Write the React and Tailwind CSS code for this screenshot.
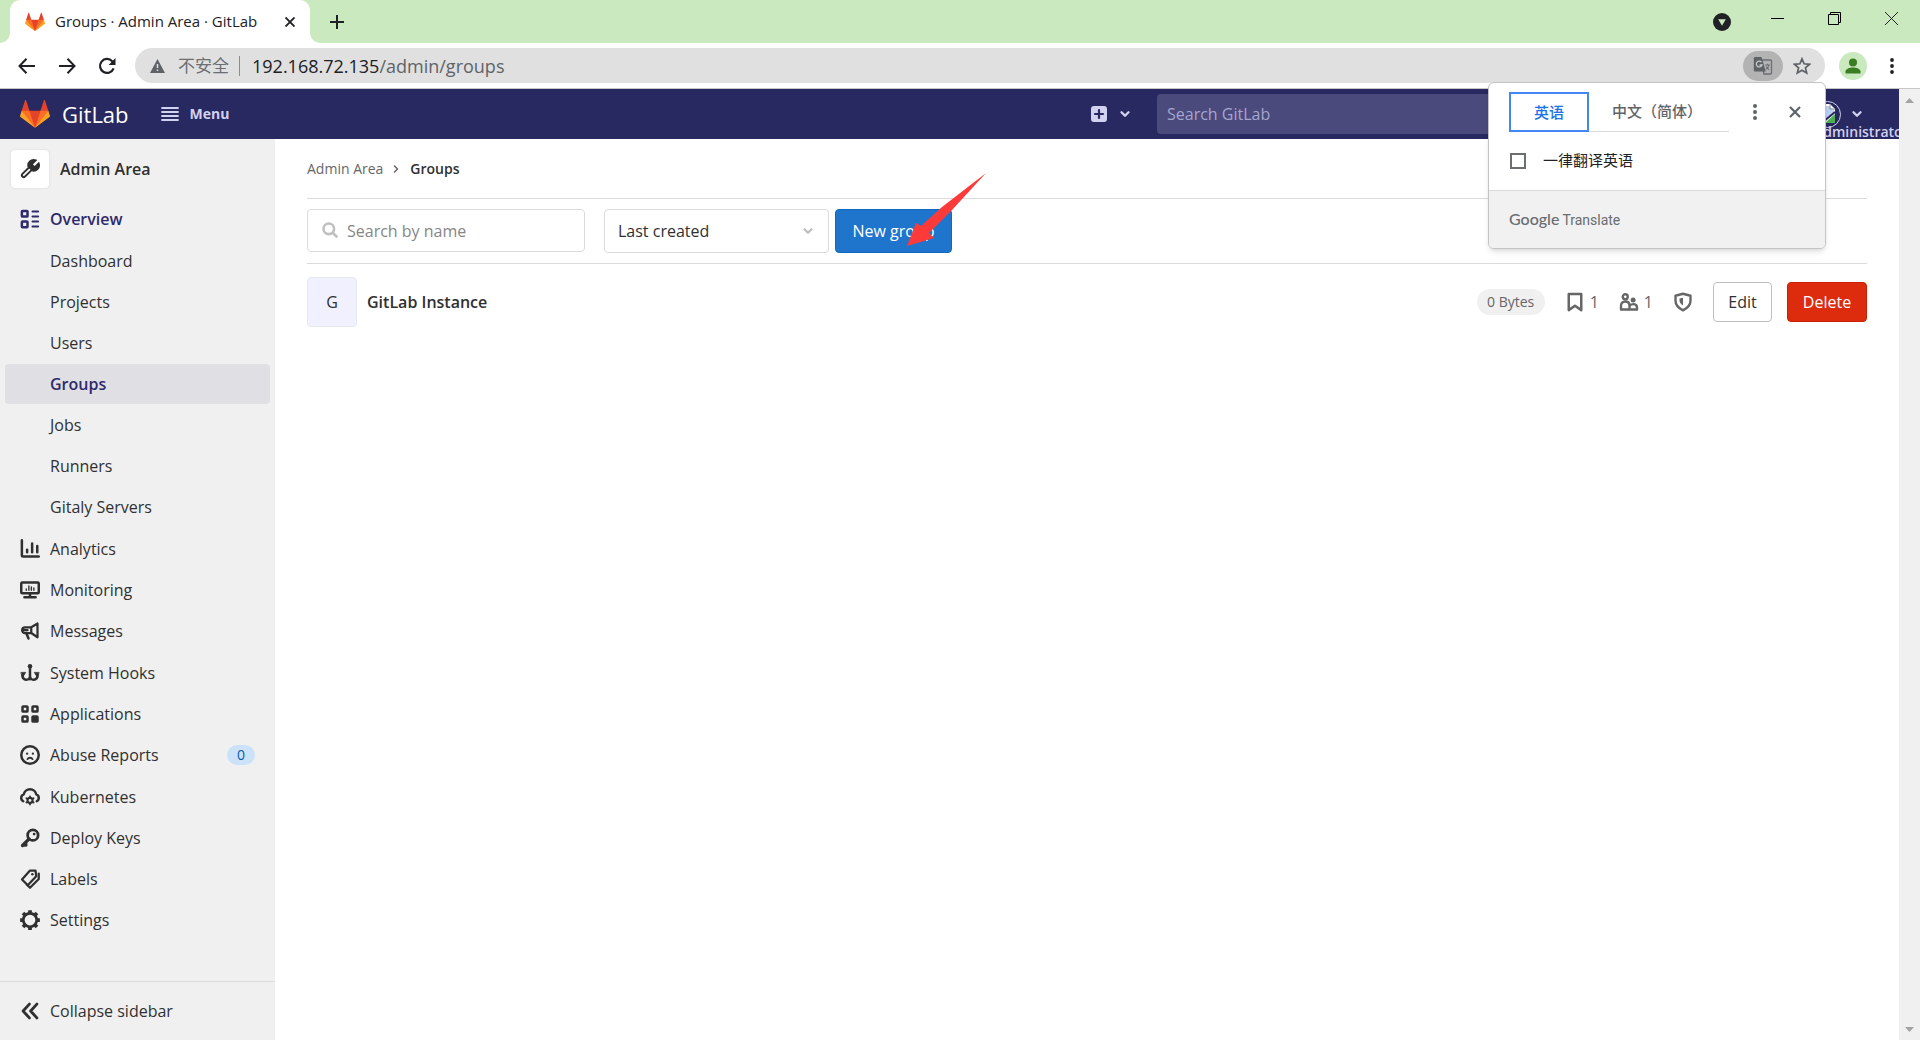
import { useState } from "react";
import { ChevronDown, ChevronRight } from "lucide-react";

const OVERVIEW_LINKS = ["Dashboard", "Projects", "Users", "Groups", "Jobs", "Runners", "Gitaly Servers"];

const NAV_GROUPS = [
  ["Analytics", "Monitoring", "Messages"],
  ["System Hooks", "Applications", "Abuse Reports"],
  ["Kubernetes", "Deploy Keys", "Labels", "Settings"],
];

// Stroked shapes on a 16x16 grid, keyed by the menu entry they belong to
const NAV_ICONS = {
  Overview: (
    <>
      <rect x="1.5" y="1.5" width="4.5" height="4.5" rx="0.5" />
      <rect x="1.5" y="10" width="4.5" height="4.5" rx="0.5" />
      <path d="M10 2h4.5M10 6h4.5M10 10h4.5M10 14h4.5" strokeWidth="1.6" />
    </>
  ),
  Analytics: <path d="M1.5 1v12a1 1 0 0 0 1 1H15M5.7 8.5v2M9.7 3.5v7M13.8 5.5v5" />,
  Monitoring: (
    <>
      <rect x="1" y="2" width="14" height="8.5" rx="0.8" />
      <path d="M8 10.5v3M3.5 13.8h9" />
      <path d="M5 7.2v1M7.1 4.8v3.4M9.1 5.6v2.6M11.1 6.4v1.8" strokeWidth="1.1" />
    </>
  ),
  Messages: (
    <>
      <path d="M14 2v11L9 9.6H4a2.2 2.2 0 0 1 0-4.6h5zM9 5v4.6M2 7.3h4" strokeWidth="1.8" />
      <path d="M5 9.6 6.8 14" />
    </>
  ),
  "System Hooks": (
    <>
      <circle cx="8" cy="2.6" r="1.8" fill="currentColor" stroke="none" />
      <path d="M8 3v10M2 9.5c0 5 6 5 6 1M14 9.5c0 5-6 5-6 1" />
      <path d="M1 7.5h3.6L2 11.5zM15 7.5h-3.6L14 11.5z" fill="currentColor" strokeWidth="0.6" />
    </>
  ),
  Applications: (
    <>
      <rect x="2" y="2" width="4" height="4" rx="0.5" />
      <rect x="10" y="2" width="4" height="4" rx="0.5" />
      <rect x="2" y="10" width="4" height="4" rx="0.5" />
      <rect x="10" y="10" width="4" height="4" rx="0.5" fill="currentColor" />
    </>
  ),
  "Abuse Reports": (
    <>
      <circle cx="8" cy="8" r="7" />
      <path d="M6 11.3c.8-1.500 3.200-1.500 4 0" strokeWidth="1.5" />
      <circle cx="5.7" cy="6.9" r="0.9" fill="currentColor" stroke="none" />
      <circle cx="10.3" cy="6.9" r="0.9" fill="currentColor" stroke="none" />
    </>
  ),
  Kubernetes: (
    <>
      <path d="M2.6 11.4A3 3 0 0 1 3 5.9a5.1 5.1 0 0 1 10 0 3 3 0 0 1 .4 5.5" />
      <circle cx="8" cy="10.7" r="2" strokeWidth="1.7" />
      <path d="M8 7.4v1M8 13v1M5.1 9l.9.6M10 11.8l.9.6M5.1 12.4l.9-.6M10 9.6l.9-.6" strokeWidth="1.4" />
    </>
  ),
  "Deploy Keys": (
    <>
      <circle cx="10.3" cy="5.7" r="4.2" strokeWidth="2.2" />
      <circle cx="11.3" cy="4.8" r="1.1" fill="currentColor" stroke="none" />
      <path d="M7.3 8.7 2 14M2.2 13.6h2.6M4.6 11.6v2" strokeWidth="2.6" />
    </>
  ),
  Labels: (
    <>
      <path d="M8 1.2h4.4L13 5.8 6.2 13 1.6 8.4z" strokeWidth="1.8" />
      <path d="M15 3.6 15 8 8 15 5.6 12.6" strokeWidth="1.8" />
      <circle cx="9.9" cy="4.2" r="1" fill="currentColor" stroke="none" />
    </>
  ),
  Settings: (
    <>
      <circle cx="8" cy="8" r="5.4" strokeWidth="2.2" />
      <path
        d="M8 .1v2.400M8 13.500v2.400M.1 8h2.400M13.500 8h2.400M2.400 2.400l1.600 1.600M12 12l1.600 1.600M2.400 13.600 4 12M12 4l1.600-1.600"
        strokeWidth="3"
        strokeLinecap="butt"
      />
    </>
  ),
  Collapse: <path d="M7.500 2.500 2.500 8l5 5.500M13.500 2.500 8.500 8l5 5.500" strokeWidth="2.300" />,
};

function NavIcon({ name }) {
  return (
    <svg
      className="size-5 shrink-0"
      viewBox="0 0 16 16"
      fill="none"
      stroke="currentColor"
      strokeWidth="2"
      strokeLinecap="round"
      strokeLinejoin="round"
      aria-hidden="true"
    >
      {NAV_ICONS[name]}
    </svg>
  );
}

function Tanuki({ className }) {
  return (
    <svg className={className} viewBox="0 0 36 36" aria-hidden="true">
      <path fill="#e24329" d="M2 14l9.38 9v-9l-4-12.28c-.205-.632-1.176-.632-1.38 0z" />
      <path fill="#e24329" d="M34 14l-9.38 9v-9l4-12.28c.205-.632 1.176-.632 1.38 0z" />
      <path fill="#e24329" d="M18 34.38 3 14h30z" />
      <path fill="#fc6d26" d="M18 34.38 11.38 14H2l4 11z" />
      <path fill="#fc6d26" d="M18 34.38 24.62 14H34l-4 11z" />
      <path fill="#fca326" d="M2 14L.1 20.16c-.18.565 0 1.2.5 1.56l17.42 12.66z" />
      <path fill="#fca326" d="M34 14l1.9 6.16c.18.565 0 1.2-.5 1.56L18 34.38z" />
    </svg>
  );
}

function TabStrip() {
  return (
    <div className="flex h-[43px] bg-[#cae9be] pl-[10px]">
      <div className="relative flex w-[300px] items-center rounded-t-[10px] bg-white pr-[10px] pl-[15px]">
        <svg className="absolute bottom-0 -left-[10px] size-[10px]" viewBox="0 0 10 10" aria-hidden="true">
          <path d="M10 0v10H0A10 10 0 0 0 10 0z" fill="#fff" />
        </svg>
        <svg className="absolute -right-[10px] bottom-0 size-[10px]" viewBox="0 0 10 10" aria-hidden="true">
          <path d="M0 0v10h10A10 10 0 0 1 0 0z" fill="#fff" />
        </svg>
        <Tanuki className="size-5" />
        <span className="ml-[10px] flex-1 text-[15px] whitespace-nowrap text-[#202124]">Groups · Admin Area · GitLab</span>
        <button type="button" aria-label="Close tab" className="flex size-5 items-center justify-center">
          <svg className="size-[10px]" viewBox="0 0 10 10" stroke="#202124" strokeWidth="1.9" aria-hidden="true">
            <path d="M.5.5l9 9M9.5.5l-9 9" />
          </svg>
        </button>
      </div>
      <button type="button" aria-label="New tab" className="ml-[17px] flex w-5 items-center justify-center">
        <svg className="size-[14px]" viewBox="0 0 14 14" stroke="#202124" strokeWidth="2" aria-hidden="true">
          <path d="M7 0v14M0 7h14" />
        </svg>
      </button>
      <div className="ml-auto flex">
        <button type="button" aria-label="Search tabs" className="flex w-9 items-center justify-center">
          <svg className="size-[18px]" viewBox="0 0 18 18" aria-hidden="true">
            <circle cx="9" cy="9" r="9" fill="#202124" />
            <path d="M5.2 6.2h7.6L9 12.8z" fill="#cae9be" />
          </svg>
        </button>
        <button type="button" aria-label="Minimize" className="ml-[9px] flex h-9 w-[57px] items-center justify-center">
          <svg className="size-[13px]" viewBox="0 0 13 13" stroke="#000" aria-hidden="true">
            <path d="M0 6.5h13" />
          </svg>
        </button>
        <button type="button" aria-label="Restore" className="flex h-9 w-[57px] items-center justify-center">
          <svg className="size-[13px]" viewBox="0 0 13 13" fill="none" stroke="#000" aria-hidden="true">
            <path d="M.5 2.5h10v10H.5zM2.5 2V.5h10v10H11" />
          </svg>
        </button>
        <button type="button" aria-label="Close window" className="flex h-9 w-[57px] items-center justify-center">
          <svg className="size-[13px]" viewBox="0 0 13 13" stroke="#222" aria-hidden="true">
            <path d="M0 0l13 13M13 0L0 13" />
          </svg>
        </button>
      </div>
    </div>
  );
}

function TranslatePopup() {
  const [always, setAlways] = useState(false);

  return (
    <div className="absolute top-[39px] right-[94px] z-20 w-[338px] overflow-hidden rounded-md border border-[#c4c4c4] bg-white text-[15px] shadow-md">
      <div className="flex h-[57px] items-end pb-2 pl-5">
        <button type="button" className="h-10 w-20 border-2 border-[#4285f4] font-medium text-[#1a73e8]">英语</button>
        <button type="button" className="h-10 w-[140px] border-b border-[#dadce0] pr-1 font-medium text-[#5f6368]">中文（简体）</button>
        <button type="button" aria-label="Options" className="ml-4 flex h-10 w-5 items-center justify-center text-[#5f6368]">
          <svg className="h-4 w-1" viewBox="0 0 4 16" fill="currentColor" aria-hidden="true">
            <circle cx="2" cy="2" r="2" />
            <circle cx="2" cy="8" r="2" />
            <circle cx="2" cy="14" r="2" />
          </svg>
        </button>
        <button type="button" aria-label="Close" className="ml-5 flex h-10 w-5 items-center justify-center">
          <svg className="size-3" viewBox="0 0 12 12" stroke="#5f6368" strokeWidth="2.2" aria-hidden="true">
            <path d="M1 1l10 10M11 1L1 11" />
          </svg>
        </button>
      </div>
      <label className="flex h-[41px] items-center pl-[21px] text-[#202124]">
        <input
          type="checkbox"
          checked={always}
          onChange={(e) => setAlways(e.target.checked)}
          className="size-4 appearance-none border-2 border-[#6b6e73] checked:bg-[#1a73e8]"
        />
        <span className="ml-[17px]">一律翻译英语</span>
      </label>
      <div className="mt-[9px] flex h-[58px] items-baseline border-t border-[#dadada] bg-[#f1f1f1] pt-4 pl-5 text-[#696c70]">
        <span className="font-[Lato] text-base font-medium">Google</span>
        <span className="ml-[3px] font-[Roboto] text-sm">Translate</span>
      </div>
    </div>
  );
}

function Toolbar() {
  return (
    <div className="relative flex h-[46px] items-center border-b border-[#c6c6c6] bg-white pr-[18px] pl-[17px]">
      <div className="flex gap-5 text-[#202124]">
        <button type="button" aria-label="Back" className="size-5">
          <svg viewBox="0 0 20 20" fill="none" stroke="currentColor" strokeWidth="2" aria-hidden="true">
            <path d="M18 10H3M9.5 2.8L2.5 10l7 7.2" />
          </svg>
        </button>
        <button type="button" aria-label="Forward" className="size-5">
          <svg viewBox="0 0 20 20" fill="none" stroke="currentColor" strokeWidth="2" aria-hidden="true">
            <path d="M2 10H17M10.5 2.8l7 7.2-7 7.2" />
          </svg>
        </button>
        <button type="button" aria-label="Reload" className="size-5">
          <svg viewBox="0 0 20 20" fill="none" stroke="currentColor" strokeWidth="2.2" aria-hidden="true">
            <path d="M16.6 12.4A7 7 0 1 1 15.2 5.2L17 7" />
            <path d="M18.5 2v6.9h-6.9z" fill="currentColor" stroke="none" />
          </svg>
        </button>
      </div>
      <div className="ml-[18px] flex h-[35px] flex-1 items-center rounded-full bg-[#e0e0e0] pr-[14px] pl-[15px]">
        <svg className="h-[14px] w-[15px]" viewBox="0 0 15 14" aria-hidden="true">
          <path d="M7.5 0L15 14H0z" fill="#5f6368" />
          <path d="M7.5 5v4M7.5 10.5v1.5" stroke="#e0e0e0" strokeWidth="1.5" />
        </svg>
        <span className="ml-[13px] text-[17px] whitespace-nowrap text-[#6b6e73]">不安全</span>
        <span className="ml-[10px] h-5 w-px bg-[#8a8c90]" />
        <div
          role="textbox"
          aria-label="Address"
          contentEditable
          suppressContentEditableWarning
          spellCheck={false}
          className="ml-3 flex-1 text-lg whitespace-nowrap text-[#5f6368] outline-none"
        >
          <span className="text-[#202124]">192.168.72.135</span>/admin/groups
        </div>
        <button type="button" aria-label="Translate this page" className="flex h-[30px] w-10 items-center justify-center rounded-full bg-[#b3b3b4]">
          <svg className="size-5" viewBox="0 0 20 20" aria-hidden="true">
            <path d="M8 4h9.5a1 1 0 0 1 1 1v12a1 1 0 0 1-1 1H11z" fill="none" stroke="#6b6e73" strokeWidth="1.3" />
            <path d="M2 1h6.5l4.3 14.5H2A1.2 1.2 0 0 1 .8 14.3V2.2A1.2 1.2 0 0 1 2 1z" fill="#5f6368" />
            <path d="M8.5 6.2A2.9 2.9 0 1 0 9 9H6.5" fill="none" stroke="#c8c8c9" strokeWidth="1.3" />
            <path d="M12 9h5M14.5 7.8V9M16 9c-.4 2-1.6 3.4-3 4.3M13.4 10.5c.6 1.3 1.6 2.4 2.9 3.2" fill="none" stroke="#6b6e73" strokeWidth="1.1" />
          </svg>
        </button>
        <button type="button" aria-label="Bookmark this page" className="ml-[10px] size-[18px]">
          <svg viewBox="0 0 18 18" fill="none" stroke="#5f6368" strokeWidth="1.7" aria-hidden="true">
            <path d="M9 1.8l2.1 5 5.4.5-4.1 3.5 1.3 5.2L9 13.2 4.3 16l1.3-5.2-4.1-3.5 5.4-.5z" />
          </svg>
        </button>
      </div>
      <button type="button" aria-label="Profile" className="ml-[14px] size-7">
        <svg viewBox="0 0 28 28" aria-hidden="true">
          <circle cx="14" cy="14" r="14" fill="#cae9be" />
          <circle cx="14" cy="10.5" r="4" fill="#3a7d22" />
          <path d="M6.5 21.5v-2c0-2.5 4-4 7.5-4s7.5 1.5 7.5 4v2z" fill="#3a7d22" />
        </svg>
      </button>
      <button type="button" aria-label="Browser menu" className="ml-[15px] flex w-5 justify-center">
        <svg className="h-4 w-1" viewBox="0 0 4 16" fill="#202124" aria-hidden="true">
          <circle cx="2" cy="2" r="1.9" />
          <circle cx="2" cy="8" r="1.9" />
          <circle cx="2" cy="14" r="1.9" />
        </svg>
      </button>
      <TranslatePopup />
    </div>
  );
}

function Navbar() {
  return (
    <header className="flex h-[50px] shrink-0 items-center overflow-hidden bg-[#292961] pr-[35px] pl-5 text-[#d1d1f0]">
      <a href="#home" className="flex items-center gap-3 text-white">
        <Tanuki className="size-[30px]" />
        <span className="text-[22px]">GitLab</span>
      </a>
      <button type="button" className="ml-8 flex items-center gap-[11px] text-sm font-bold">
        <svg className="h-[14px] w-[18px]" viewBox="0 0 18 14" stroke="currentColor" strokeWidth="1.8" strokeLinecap="round" aria-hidden="true">
          <path d="M1 1h16M1 5h16M1 9h16M1 13h16" />
        </svg>
        Menu
      </button>
      <button type="button" aria-label="Create new" className="ml-auto flex items-center gap-[11px]">
        <svg className="size-4" viewBox="0 0 16 16" aria-hidden="true">
          <rect width="16" height="16" rx="3" fill="currentColor" />
          <path d="M8 4v8M4 8h8" stroke="#292961" strokeWidth="2.2" strokeLinecap="round" />
        </svg>
        <ChevronDown className="size-[14px]" strokeWidth={4} />
      </button>
      <input
        type="text"
        aria-label="Search GitLab"
        placeholder="Search GitLab"
        className="mr-[317px] ml-[25px] h-10 w-[340px] rounded bg-[#4b4a7c] px-[10px] text-base outline-none placeholder:text-[#a5a5cf]"
      />
      <button type="button" aria-label="User menu" className="relative flex items-center gap-[9px]">
        <span className="flex size-[27px] items-center justify-center overflow-hidden rounded-full border border-[#d1d1f0]">
          <svg className="h-5 w-4" viewBox="0 0 16 20" aria-hidden="true">
            <path d="M0 0h10l5 5v14H0z" fill="#fff" />
            <path d="M1 2h8l5 4v4L3 18H1z" fill="#bcd0f5" />
            <path d="M5 19l10-9v9z" fill="#4caf50" />
            <path d="M3 18L15 8" stroke="#292961" strokeWidth="2" />
            <path d="M10 0v5h5" fill="none" stroke="#8a8c90" />
          </svg>
        </span>
        <ChevronDown className="size-[14px]" strokeWidth={4} />
        <span className="absolute top-[21px] left-0 text-sm font-semibold">Administrator</span>
      </button>
    </header>
  );
}

function Sidebar() {
  const current = "Groups";

  return (
    <aside className="flex w-[275px] shrink-0 flex-col bg-[#f0f0f0] text-base text-[#303030]">
      <a href="#admin" className="flex items-center gap-[11px] px-[11px] pt-[11px] font-semibold">
        <span className="flex size-[38px] items-center justify-center rounded bg-white shadow-[0_0_2px_#ccc]">
          <svg className="size-[22px]" viewBox="0 0 24 24" aria-hidden="true">
            <path
              d="M14.7 6.3a1 1 0 0 0 0 1.4l1.6 1.6a1 1 0 0 0 1.4 0l3.77-3.77a6 6 0 0 1-7.94 7.94l-6.91 6.91a2.12 2.12 0 0 1-3-3l6.91-6.91a6 6 0 0 1 7.94-7.94l-3.76 3.76z"
              fill="currentColor"
              stroke="currentColor"
              strokeWidth="1.8"
            />
            <path d="M5.2 18.800l6.200-6.200" stroke="#fff" strokeWidth="1.9" strokeLinecap="round" />
          </svg>
        </span>
        Admin Area
      </a>
      <nav className="mt-[11px] flex flex-1 flex-col gap-px px-[5px]">
        <a href="#overview" className="flex h-10 items-center gap-[10px] pl-[15px] font-semibold text-[#2f2a6b]">
          <NavIcon name="Overview" />
          Overview
        </a>
        <ul className="flex flex-col gap-px py-px">
          {OVERVIEW_LINKS.map((label) => (
            <li key={label}>
              <a
                href="#overview"
                className={
                  label === current
                    ? "flex h-10 items-center rounded bg-[#e0dfe4] pl-[45px] font-semibold text-[#2f2a6b]"
                    : "flex h-10 items-center pl-[45px]"
                }
              >
                {label}
              </a>
            </li>
          ))}
        </ul>
        <div className="flex flex-col gap-0.5">
          {NAV_GROUPS.map((group) => (
            <ul key={group[0]} className="flex flex-col gap-px">
              {group.map((label) => (
                <li key={label}>
                  <a href="#nav" className="flex h-10 items-center gap-[10px] px-[15px]">
                    <NavIcon name={label} />
                    {label}
                    {label === "Abuse Reports" && (
                      <span className="ml-auto flex h-5 w-7 items-center justify-center rounded-full bg-[#cbe2f9] text-sm text-[#0b5cad]">
                        0
                      </span>
                    )}
                  </a>
                </li>
              ))}
            </ul>
          ))}
        </div>
      </nav>
      <button type="button" className="flex h-[59px] items-center gap-[10px] border-t border-[#dbdbdb] pl-5">
        <NavIcon name="Collapse" />
        Collapse sidebar
      </button>
    </aside>
  );
}

function FilterBar() {
  return (
    <div className="flex h-[65px] items-start border-b border-[#dbdbdb] pt-[10px] text-base">
      <div className="relative">
        <svg className="absolute top-[13px] left-[15px] size-4" viewBox="0 0 16 16" fill="none" stroke="#bfbfbf" strokeWidth="2.6" strokeLinecap="round" aria-hidden="true">
          <circle cx="6.8" cy="6.8" r="5.3" />
          <path d="M11 11l3.5 3.5" />
        </svg>
        <input
          type="search"
          aria-label="Search by name"
          placeholder="Search by name"
          className="h-[43px] w-[278px] rounded border border-[#dbdbdb] pl-[39px] outline-none placeholder:text-[#868686]"
        />
      </div>
      <div className="relative ml-[19px]">
        <select
          aria-label="Sort by"
          className="h-11 w-[225px] appearance-none rounded border border-[#dbdbdb] bg-white pl-[13px] text-[#303030] outline-none"
        >
          <option>Last created</option>
        </select>
        <ChevronDown className="absolute top-[15px] right-[14px] size-[14px] text-[#bfbfbf]" strokeWidth={4} />
      </div>
      <div className="relative ml-[6px]">
        <button type="button" className="h-11 w-[117px] rounded border border-[#1068bf] bg-[#1f75cb] text-white">
          New group
        </button>
        {/* red pointer drawn over the button */}
        <svg className="pointer-events-none absolute -top-9 left-[72px] h-[73px] w-[79px]" viewBox="0 0 79 73" aria-hidden="true">
          <path d="M79 0L35 34 14 53 9 50 0 73 27 65 22 60 45 37z" fill="#fd3a3a" />
        </svg>
      </div>
    </div>
  );
}

function GroupRow() {
  return (
    <div className="flex items-center pt-[13px] text-base text-[#303030]">
      <span className="flex size-[50px] items-center justify-center rounded border border-[#e8e8ef] bg-[#f1f0ff]">G</span>
      <a href="#group" className="ml-[10px] flex-1 font-semibold">GitLab Instance</a>
      <span className="flex h-[26px] w-[68px] items-center justify-center rounded-full bg-[#f0f0f0] text-sm text-[#666]">0 Bytes</span>
      <span className="ml-5 flex items-center gap-[5px] text-[#666]">
        <svg className="size-5" viewBox="0 0 16 16" fill="none" stroke="currentColor" strokeWidth="2" strokeLinejoin="round" aria-hidden="true">
          <path d="M3 1.5h10v13L8 11l-5 3.5z" />
        </svg>
        1
      </span>
      <span className="ml-5 flex items-center gap-[5px] text-[#666]">
        <svg className="size-5" viewBox="0 0 16 16" fill="none" stroke="currentColor" strokeWidth="1.9" strokeLinejoin="round" aria-hidden="true">
          <circle cx="5" cy="3.8" r="2" />
          <path d="M1.6 14V11c0-2 1.4-3.4 3.4-3.4S8.4 9 8.4 11v3zM8.400 14h6v-1.600c0-1.700-1.300-2.700-3-2.700-1.400 0-2.400.5-3 1.600z" />
          <circle cx="11.3" cy="6.3" r="2" fill="currentColor" stroke="none" />
        </svg>
        1
      </span>
      <svg className="ml-5 size-5 text-[#666]" viewBox="0 0 16 16" fill="none" stroke="currentColor" strokeWidth="1.9" strokeLinejoin="round" aria-hidden="true">
        <path d="M8 1.4L14 3v4c0 3.500-2.600 6-6 7.700C4.600 13 2 10.500 2 7V3z" />
        <path d="M8 4.600v6.200C6 9.500 5.200 8.300 5.200 6.800V5.200z" fill="currentColor" stroke="none" />
      </svg>
      <button type="button" className="ml-5 h-10 w-[59px] rounded border border-[#bfbfbf] bg-white">Edit</button>
      <button type="button" className="ml-[15px] h-10 w-20 rounded border border-[#c92100] bg-[#dd2b0e] text-white">Delete</button>
    </div>
  );
}

function Scrollbar() {
  return (
    <div className="flex w-[21px] shrink-0 flex-col items-center justify-between bg-[#f0f0f0] pt-[9px] pb-2">
      <svg className="h-[5px] w-[9px]" viewBox="0 0 9 5" aria-hidden="true">
        <path d="M4.5 0L9 5H0z" fill="#a3a3a3" />
      </svg>
      <svg className="h-[5px] w-[9px]" viewBox="0 0 9 5" aria-hidden="true">
        <path d="M4.5 5L9 0H0z" fill="#a3a3a3" />
      </svg>
    </div>
  );
}

export default function App() {
  return (
    <div className="flex h-screen flex-col bg-white font-['Open_Sans','Noto_Sans_CJK_SC',sans-serif]">
      <TabStrip />
      <Toolbar />
      <div className="flex min-h-0 flex-1">
        <div className="flex min-w-0 flex-1 flex-col">
          <Navbar />
          <div className="flex min-h-0 flex-1">
            <Sidebar />
            <main className="min-w-0 flex-1 px-8">
              <nav aria-label="Breadcrumb" className="flex h-[60px] items-center border-b border-[#dbdbdb] text-sm text-[#666]">
                <a href="#admin">Admin Area</a>
                <ChevronRight className="mr-2 ml-[7px] size-3" strokeWidth={3} />
                <a href="#groups" className="font-semibold text-[#303030]">Groups</a>
              </nav>
              <FilterBar />
              <GroupRow />
            </main>
          </div>
        </div>
        <Scrollbar />
      </div>
    </div>
  );
}
